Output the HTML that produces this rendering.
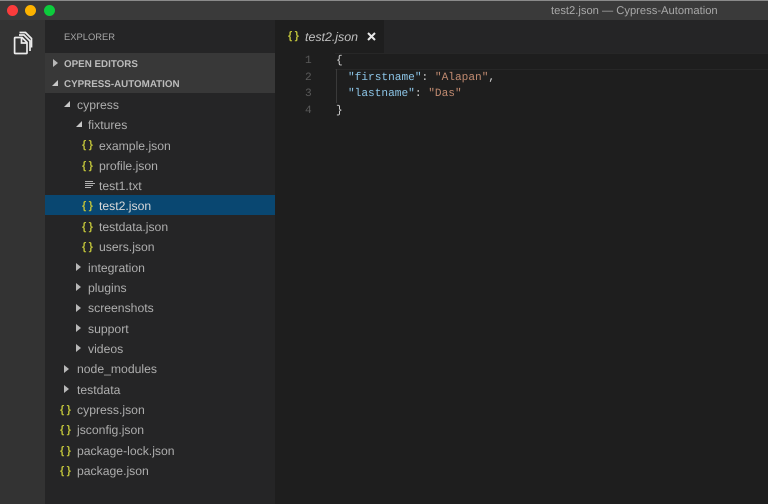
<!DOCTYPE html>
<html>
<head>
<meta charset="utf-8">
<style>
html,body{margin:0;padding:0;background:#1e1e1e;}
#app{position:relative;width:768px;height:504px;overflow:hidden;background:#1e1e1e;font-family:"Liberation Sans",sans-serif;text-rendering:geometricPrecision;}
.a{position:absolute;}
.t{position:absolute;white-space:nowrap;font-size:12.2px;line-height:20px;height:20px;color:#adadad;margin-top:.5px;filter:blur(.3px);}
.b{position:absolute;white-space:nowrap;font-size:9.8px;font-weight:bold;line-height:20px;height:20px;color:#bcbcbc;margin-top:1.5px;filter:blur(.25px);}
.j{position:absolute;white-space:nowrap;font-family:"Liberation Mono",monospace;font-size:11.15px;line-height:17px;height:17px;color:#d4d4d4;filter:blur(.3px);}
.n{color:#5a5a5a;}
.j .k{color:#8cc4e6;}
.j .s{color:#c08a70;}
.ic{position:absolute;white-space:nowrap;font-family:"Liberation Sans",sans-serif;font-weight:bold;font-size:11px;line-height:20px;height:20px;color:#bcbf3a;letter-spacing:2.4px;margin-top:.5px;filter:blur(.25px);}
.tri{position:absolute;width:0;height:0;border-style:solid;filter:blur(.3px);}
.r{border-width:4px 0 4px 5px;border-color:transparent transparent transparent #b8b8b8;}
.d{border-width:0 0 6px 6px;border-color:transparent transparent #c8c8c8 transparent;margin-top:1px;}
</style>
</head>
<body>
<div id="app">
  <!-- title bar -->
  <div class="a" style="left:0;top:0;width:768px;height:20px;background:#3a3a3a;"></div>
  <div class="a" style="left:0;top:0;width:768px;height:1px;background:#8a8a8a;"></div>
  <div class="a" style="left:7px;top:5px;width:11px;height:11px;border-radius:50%;background:#fb3c3c;"></div>
  <div class="a" style="left:25px;top:5px;width:11px;height:11px;border-radius:50%;background:#fdb300;"></div>
  <div class="a" style="left:44px;top:5px;width:11px;height:11px;border-radius:50%;background:#0ccc3c;"></div>
  <div class="t" style="left:551px;top:.5px;font-size:11.2px;color:#a8a8a8;">test2.json — Cypress-Automation</div>

  <!-- activity bar -->
  <div class="a" style="left:0;top:20px;width:45px;height:484px;background:#333333;"></div>
  <svg class="a" style="left:12px;top:31px;filter:blur(.25px);" width="22" height="24" viewBox="0 0 22 24" fill="none" stroke="#ececec" stroke-width="1.7">
    <path d="M3.4 6.5h6.6l5 5v10.2q0 .8-.8 .8h-10.8q-.8 0-.8-.8v-14.4q0-.8 .8-.8z"/>
    <path d="M9.5 7v5h5.5"/>
    <path d="M7 4h5l6 6v10"/>
    <path d="M7.5 1.5h6l6 6v9"/>
  </svg>

  <!-- sidebar -->
  <div class="a" style="left:45px;top:20px;width:230px;height:484px;background:#252526;"></div>
  <div class="t" style="left:64px;top:26.5px;font-size:9.4px;color:#a5a5a5;">EXPLORER</div>
  <div class="a" style="left:45px;top:53px;width:230px;height:40px;background:#383838;"></div>
  <div class="tri r" style="left:53px;top:59px;"></div>
  <div class="b" style="left:64px;top:53px;">OPEN EDITORS</div>
  <div class="tri d" style="left:52px;top:79px;"></div>
  <div class="b" style="left:64px;top:73px;">CYPRESS-AUTOMATION</div>

  <div class="a" style="left:45px;top:195px;width:230px;height:20px;background:#094771;"></div>

  <div class="tri d" style="left:64px;top:100px;"></div><div class="t" style="left:77px;top:94px;">cypress</div>
  <div class="tri d" style="left:76px;top:120px;"></div><div class="t" style="left:88px;top:114px;">fixtures</div>

  <div class="ic" style="left:82px;top:134px;">{}</div><div class="t" style="left:99px;top:135px;">example.json</div>
  <div class="ic" style="left:82px;top:155px;">{}</div><div class="t" style="left:99px;top:155px;">profile.json</div>
  <svg class="a" style="left:85px;top:181px;" width="11" height="9" viewBox="0 0 11 9" stroke="#b0b0b0" stroke-width="1"><path d="M0 .5h8M0 2.5h10M0 4.5h8M0 6.5h6"/></svg>
  <div class="t" style="left:99px;top:175px;">test1.txt</div>
  <div class="ic" style="left:82px;top:195px;">{}</div><div class="t" style="left:99px;top:195px;color:#d8d8d8;">test2.json</div>
  <div class="ic" style="left:82px;top:216px;">{}</div><div class="t" style="left:99px;top:216px;">testdata.json</div>
  <div class="ic" style="left:82px;top:236px;">{}</div><div class="t" style="left:99px;top:236px;">users.json</div>

  <div class="tri r" style="left:76px;top:263px;"></div><div class="t" style="left:88px;top:257px;">integration</div>
  <div class="tri r" style="left:76px;top:283px;"></div><div class="t" style="left:88px;top:277px;">plugins</div>
  <div class="tri r" style="left:76px;top:304px;"></div><div class="t" style="left:88px;top:297px;">screenshots</div>
  <div class="tri r" style="left:76px;top:324px;"></div><div class="t" style="left:88px;top:318px;">support</div>
  <div class="tri r" style="left:76px;top:344px;"></div><div class="t" style="left:88px;top:338px;">videos</div>
  <div class="tri r" style="left:64px;top:365px;"></div><div class="t" style="left:77px;top:358px;">node_modules</div>
  <div class="tri r" style="left:64px;top:385px;"></div><div class="t" style="left:77px;top:379px;">testdata</div>

  <div class="ic" style="left:60px;top:399px;">{}</div><div class="t" style="left:77px;top:399px;">cypress.json</div>
  <div class="ic" style="left:60px;top:419px;">{}</div><div class="t" style="left:77px;top:419px;">jsconfig.json</div>
  <div class="ic" style="left:60px;top:440px;">{}</div><div class="t" style="left:77px;top:440px;">package-lock.json</div>
  <div class="ic" style="left:60px;top:460px;">{}</div><div class="t" style="left:77px;top:460px;">package.json</div>

  <!-- tab bar -->
  <div class="a" style="left:275px;top:20px;width:493px;height:33px;background:#252526;"></div>
  <div class="a" style="left:275px;top:20px;width:109px;height:33px;background:#1e1e1e;"></div>
  <div class="ic" style="left:288px;top:25px;">{}</div>
  <div class="t" style="left:305px;top:26px;font-style:italic;font-size:12.4px;color:#c0c0c0;">test2.json</div>
  <svg class="a" style="left:367px;top:32px;" width="9" height="9" viewBox="0 0 9 9" stroke="#e8e8e8" stroke-width="2"><path d="M1 1l7 7M8 1l-7 7"/></svg>

  <!-- editor -->
  <div class="a" style="left:335px;top:53px;width:433px;height:15px;border-top:1px solid #272727;border-bottom:1px solid #272727;"></div>
  <div class="a" style="left:336px;top:69px;width:1px;height:34px;background:#3a3a3a;"></div>

  <div class="j n" style="left:305px;top:53px;">1</div>
  <div class="j n" style="left:305px;top:70px;">2</div>
  <div class="j n" style="left:305px;top:86px;">3</div>
  <div class="j n" style="left:305px;top:103px;">4</div>

  <div class="j" style="left:336px;top:53px;">{</div>
  <div class="j" style="left:348px;top:70px;"><span class="k">"firstname"</span>: <span class="s">"Alapan"</span>,</div>
  <div class="j" style="left:348px;top:86px;"><span class="k">"lastname"</span>: <span class="s">"Das"</span></div>
  <div class="j" style="left:336px;top:103px;">}</div>
</div>
</body>
</html>
